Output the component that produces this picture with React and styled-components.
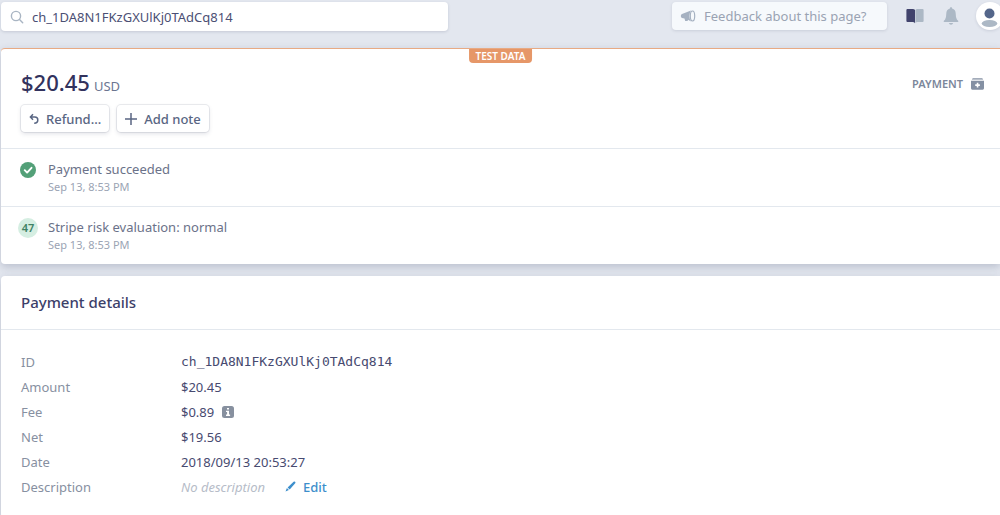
import React, { useState } from 'react';
import styled, { createGlobalStyle, css } from 'styled-components';

const GlobalStyle = createGlobalStyle`
  * {
    box-sizing: border-box;
  }
  body {
    margin: 0;
    overflow-x: hidden;
    background-color: #e3e7ef;
    color: #3c4069;
    font-family: 'Noto Sans', 'Open Sans', sans-serif;
    font-size: 13px;
    line-height: 18px;
  }
  button, input {
    font: inherit;
    color: inherit;
  }
  h1, h2, p, ul, dl, dd {
    margin: 0;
    padding: 0;
  }
`;
const Page = styled.div`
  display: flex;
  flex-direction: column;
  gap: 12px;
  min-height: 100vh;
  padding-left: 1px;
  overflow: hidden;
`;
const TopBar = styled.header`
  display: flex;
  align-items: flex-start;
  justify-content: space-between;
  height: 36px;
  padding-top: 2px;
`;
const SearchBox = styled.label`
  display: flex;
  align-items: center;
  gap: 8px;
  width: 447px;
  height: 29px;
  padding: 0 9px;
  border-radius: 4px;
  background-color: #fff;
  box-shadow: 0 1px 3px rgba(60, 66, 100, 0.18);
`;
const SearchInput = styled.input`
  flex: 1;
  min-width: 0;
  padding: 0;
  border: 0;
  outline: 0;
  background: none;
  color: #4b4f74;
`;
const Tools = styled.div`
  display: flex;
  align-items: center;
  margin-right: -4px;
`;
const FeedbackButton = styled.button`
  display: flex;
  align-items: center;
  gap: 8px;
  width: 215px;
  height: 28px;
  margin-right: 10px;
  padding: 0 8px;
  border: 0;
  border-radius: 4px;
  background-color: #f6f9fc;
  box-shadow: 0 1px 3px rgba(60, 66, 100, 0.15);
  color: #9aa3b3;
`;
const IconButton = styled.button`
  display: flex;
  align-items: center;
  justify-content: center;
  width: 36px;
  height: 28px;
  padding: 0;
  border: 0;
  background: none;
`;
const AvatarButton = styled(IconButton)`
  width: 28px;
  margin-left: 7px;
  border-radius: 50%;
  background-color: #fff;
  box-shadow: 0 1px 3px rgba(60, 66, 100, 0.15);
`;
const Card = styled.section`
  position: relative;
  border-radius: 4px 0 0 4px;
  background-color: #fff;
  box-shadow: 0 3px 8px rgba(60, 66, 100, 0.24);
  ${props => props.$test && css`
    border-top: 1px solid #e8aa84;
  `}
  ${props => props.$grow && css`
    flex: 1;
  `}
`;
const TestBadge = styled.span`
  position: absolute;
  top: 0;
  left: 50%;
  padding: 0 7px;
  border-radius: 0 0 4px 4px;
  background-color: #e69768;
  color: #fff;
  font-size: 10px;
  font-weight: 600;
  line-height: 14px;
  transform: translateX(-50%);
`;
const Summary = styled.div`
  padding: 19px 16px 16px 20px;
`;
const SummaryHead = styled.div`
  display: flex;
  align-items: center;
  justify-content: space-between;
  margin-bottom: 5px;
`;
const Amount = styled.h1`
  color: #32325d;
  font-size: 22px;
  font-weight: 500;
  line-height: 28px;
`;
const Currency = styled.span`
  margin-left: 4px;
  color: #6b7591;
  font-size: 13px;
  font-weight: 400;
`;
const Kind = styled.span`
  display: flex;
  align-items: center;
  gap: 8px;
  color: #7c879b;
  font-size: 11px;
  font-weight: 600;
`;
const Actions = styled.div`
  display: flex;
  gap: 8px;
`;
const ActionButton = styled.button`
  display: flex;
  align-items: center;
  gap: 7px;
  height: 27px;
  padding: 0 8px;
  border: 0;
  border-radius: 4px;
  background-color: #fff;
  box-shadow: 0 0 0 1px rgba(60, 66, 100, 0.1), 0 2px 4px rgba(60, 66, 100, 0.15);
  color: #596683;
  font-weight: 500;
`;
const EventList = styled.ul`
  list-style: none;
`;
const EventItem = styled.li`
  display: flex;
  gap: 10px;
  height: 58px;
  padding: 11px 17px;
  border-top: 1px solid #e3e8ee;
`;
const EventIcon = styled.span`
  display: flex;
  align-items: center;
  justify-content: center;
  width: 20px;
  height: 20px;
  border-radius: 50%;
  ${props => props.$score && css`
    background-color: #d5eee2;
    color: #3f8264;
    font-size: 11px;
    font-weight: 600;
  `}
`;
const EventTitle = styled.p`
  color: #6b7289;
`;
const EventTime = styled.p`
  color: #9ba4b4;
  font-size: 11px;
`;
const CardTitle = styled.h2`
  padding: 17px 20px 18px;
  border-bottom: 1px solid #e3e8ee;
  color: #3c4069;
  font-size: 15px;
  font-weight: 500;
`;
const DetailList = styled.dl`
  display: grid;
  grid-template-columns: 160px 1fr;
  grid-auto-rows: 25px;
  align-items: center;
  padding: 19px 20px;
`;
const Term = styled.dt`
  color: #8790a1;
`;
const Value = styled.dd`
  display: flex;
  align-items: center;
  gap: 8px;
  color: #474a70;
  ${props => props.$mono && css`
    font-family: 'DejaVu Sans Mono', 'Liberation Mono', monospace;
  `}
`;
const Empty = styled.em`
  margin-right: 12px;
  color: #b6bcc8;
`;
const EditLink = styled.a`
  display: flex;
  align-items: center;
  gap: 7px;
  color: #3d8fcc;
  font-weight: 500;
  text-decoration: none;
`;

const SearchIcon = () => (
  <svg width="14" height="14" viewBox="0 0 14 14" fill="none" stroke="#a9b5c3" strokeWidth="1.4" strokeLinecap="round">
    <circle cx="6" cy="6" r="4.6" />
    <path d="M9.5 9.5l3.2 3.2" />
  </svg>
);
const MegaphoneIcon = () => (
  <svg width="16" height="14" viewBox="0 0 16 14" fill="#a5b1c1">
    <path d="M11 1.5Q9.400 4 9.400 7t1.600 5.500L8 10.800 7.600 12H5.200l-.7-2.400L2 9Q.8 8.600.8 7T2 5z" />
    <ellipse cx="12.500" cy="7" rx="2.200" ry="5" fill="none" stroke="#a5b1c1" strokeWidth="1.200" />
  </svg>
);
const BookIcon = () => (
  <svg width="18" height="16" viewBox="0 0 18 16">
    <path fill="#41436c" d="M1.4 1h5.2Q8.5 1 9 2v13.2q-.7-1.2-2.4-1.2H1.4Q.4 14 .4 13V2q0-1 1-1z" />
    <path fill="#acb8c5" d="M9.4 2q.6-1 2-1h5.200q1 0 1 1v11q0 1-1 1h-5.200q-1.300 0-2 1.100z" />
  </svg>
);
const BellIcon = () => (
  <svg width="16" height="18" viewBox="0 0 16 18" fill="#acb8c5">
    <path d="M8 0q1.1 0 1.1 1.5 3.6.9 3.6 5 0 4.2 1.2 6l1.4 1.4q.4 1.1-.8 1.1h-13q-1.200 0-.8-1.100l1.400-1.400q1.200-1.800 1.200-6 0-4.100 3.600-5Q6.900 0 8 0z" />
    <path d="M5.800 16h4.400q-.6 1.700-2.200 1.700T5.800 16z" />
  </svg>
);
const AvatarIcon = () => (
  <svg width="28" height="28" viewBox="0 0 28 28">
    <circle cx="13.5" cy="11.5" r="5" fill="#54668a" />
    <ellipse cx="13.5" cy="21.5" rx="7.8" ry="3.5" fill="#acb8c5" />
  </svg>
);
const PaymentIcon = () => (
  <svg width="13" height="12" viewBox="0 0 12 11" fill="#8490a3">
    <path d="M2 0h8q1 0 1.2 1.5H.8Q1 0 2 0z" opacity=".75" />
    <path fillRule="evenodd" d="M0 2.5h12v7q0 1.2-1.2 1.2H1.2Q0 10.7 0 9.5zM5.300 4.400v1.400H3.900v1.500h1.400v1.400h1.500V7.300h1.400V5.800H6.800V4.400z" />
  </svg>
);
const RefundIcon = () => (
  <svg width="10" height="12" viewBox="0 0 10 12" fill="none" stroke="#596683" strokeWidth="1.5">
    <path d="M4 1.2L1.4 4 4 6.8M1.6 4h4.2q3 0 3 3 0 3.2-3.6 3.2" />
  </svg>
);
const PlusIcon = () => (
  <svg width="12" height="12" viewBox="0 0 12 12" stroke="#596683" strokeWidth="1.5">
    <path d="M6 0v12M0 6h12" />
  </svg>
);
const CheckIcon = () => (
  <svg width="16" height="16" viewBox="0 0 16 16">
    <circle cx="8" cy="8" r="8" fill="#53a078" />
    <path d="M4.700 8.200l2.400 2.400 4.400-4.800" fill="none" stroke="#fff" strokeWidth="1.9" strokeLinecap="round" strokeLinejoin="round" />
  </svg>
);
const InfoIcon = () => (
  <svg width="12" height="12" viewBox="0 0 12 12">
    <rect width="12" height="12" rx="2.5" fill="#87909f" />
    <path d="M5 2h2v1.600H5zM4 4.700h3v3.700h1.100V10H4V8.400h1.100V6.100H4z" fill="#fff" />
  </svg>
);
const PencilIcon = () => (
  <svg width="11" height="11" viewBox="0 0 11 11" fill="#3d8fcc">
    <path d="M8.600.7q.7-.6 1.500.1t.1 1.500L4.700 8.400 2.600 6.400zM1.900 7.100l2 2L.5 10.500z" />
  </svg>
);

const events = [
  { title: 'Payment succeeded', time: 'Sep 13, 8:53 PM' },
  { title: 'Stripe risk evaluation: normal', time: 'Sep 13, 8:53 PM', score: 47 },
];

function Event({ title, time, score }) {
  return (
    <EventItem>
      <EventIcon $score={Boolean(score)}>{score || <CheckIcon />}</EventIcon>
      <div>
        <EventTitle>{title}</EventTitle>
        <EventTime>{time}</EventTime>
      </div>
    </EventItem>
  );
}

function App() {
  const [query, setQuery] = useState('ch_1DA8N1FKzGXUlKj0TAdCq814');
  return (
    <Page>
      <GlobalStyle />
      <TopBar>
        <SearchBox>
          <SearchIcon />
          <SearchInput
            type="text"
            aria-label="Search"
            spellCheck={false}
            value={query}
            onChange={e => setQuery(e.target.value)}
          />
        </SearchBox>
        <Tools>
          <FeedbackButton type="button">
            <MegaphoneIcon />
            Feedback about this page?
          </FeedbackButton>
          <IconButton type="button" aria-label="Documentation"><BookIcon /></IconButton>
          <IconButton type="button" aria-label="Notifications"><BellIcon /></IconButton>
          <AvatarButton type="button" aria-label="Account"><AvatarIcon /></AvatarButton>
        </Tools>
      </TopBar>
      <Card $test>
        <TestBadge>TEST DATA</TestBadge>
        <Summary>
          <SummaryHead>
            <Amount>
              $20.45
              <Currency>USD</Currency>
            </Amount>
            <Kind>
              PAYMENT
              <PaymentIcon />
            </Kind>
          </SummaryHead>
          <Actions>
            <ActionButton type="button">
              <RefundIcon />
              Refund…
            </ActionButton>
            <ActionButton type="button">
              <PlusIcon />
              Add note
            </ActionButton>
          </Actions>
        </Summary>
        <EventList>
          {events.map(event => <Event key={event.title} {...event} />)}
        </EventList>
      </Card>
      <Card $grow>
        <CardTitle>Payment details</CardTitle>
        <DetailList>
          <Term>ID</Term>
          <Value $mono>ch_1DA8N1FKzGXUlKj0TAdCq814</Value>
          <Term>Amount</Term>
          <Value>$20.45</Value>
          <Term>Fee</Term>
          <Value>
            $0.89
            <InfoIcon />
          </Value>
          <Term>Net</Term>
          <Value>$19.56</Value>
          <Term>Date</Term>
          <Value>2018/09/13 20:53:27</Value>
          <Term>Description</Term>
          <Value>
            <Empty>No description</Empty>
            <EditLink href="#edit">
              <PencilIcon />
              Edit
            </EditLink>
          </Value>
        </DetailList>
      </Card>
    </Page>
  );
}

export default App;
